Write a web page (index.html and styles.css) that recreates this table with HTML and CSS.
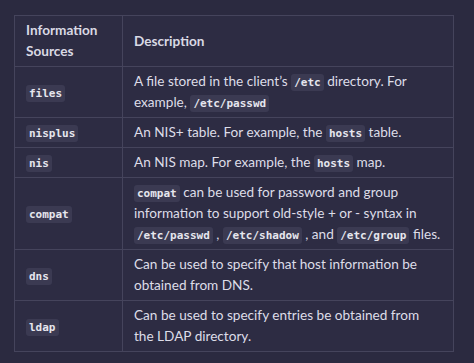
FILE: index.html
```html
<!DOCTYPE html>
<html>
<head>
<meta charset="utf-8">
<link rel="stylesheet" href="styles.css">
</head>
<body>
<div class="wrap">
<table class="info">
  <thead>
    <tr><th class="c1">Information Sources</th><th>Description</th></tr>
  </thead>
  <tbody>
    <tr><td class="c1"><code>files</code></td><td>A file stored in the client’s <code>/etc</code> directory. For example, <code>/etc/passwd</code></td></tr>
    <tr><td class="c1"><code>nisplus</code></td><td>An NIS+ table. For example, the <code>hosts</code> table.</td></tr>
    <tr><td class="c1"><code>nis</code></td><td>An NIS map. For example, the <code>hosts</code> map.</td></tr>
    <tr><td class="c1"><code>compat</code></td><td><code>compat</code> can be used for password and group information to support old-style + or - syntax in <code>/etc/passwd</code> , <code>/etc/shadow</code> , and <code>/etc/group</code> files.</td></tr>
    <tr><td class="c1"><code>dns</code></td><td>Can be used to specify that host information be obtained from DNS.</td></tr>
    <tr><td class="c1"><code>ldap</code></td><td>Can be used to specify entries be obtained from the LDAP directory.</td></tr>
  </tbody>
</table>
</div>
</body>
</html>
```

FILE: styles.css
```css
html, body {
  margin: 0;
  padding: 0;
  background: #2b2a40;
}
body {
  font-family: Lato, "Noto Sans", sans-serif;
  font-size: 13.6px;
  line-height: 21px;
  color: #dddde8;
}
.wrap {
  padding: 15px 0 0 14px;
}
.info {
  width: 440px;
  border-collapse: collapse;
  background: #2d2c43;
}
.info th, .info td {
  border: 1px solid #45445c;
  padding: 4px 11px;
  text-align: left;
  vertical-align: middle;
}
.info th {
  font-weight: bold;
  color: #d9d9e4;
}
.info .c1 {
  width: 85px;
}
.info .two {
  padding-bottom: 5px;
}
code {
  font-family: "DejaVu Sans Mono", monospace;
  font-size: 11px;
  line-height: 14px;
  font-weight: bold;
  background: #3b3a52;
  color: #e6e6ee;
  padding: 2px 3px;
  border-radius: 3px;
}
```
